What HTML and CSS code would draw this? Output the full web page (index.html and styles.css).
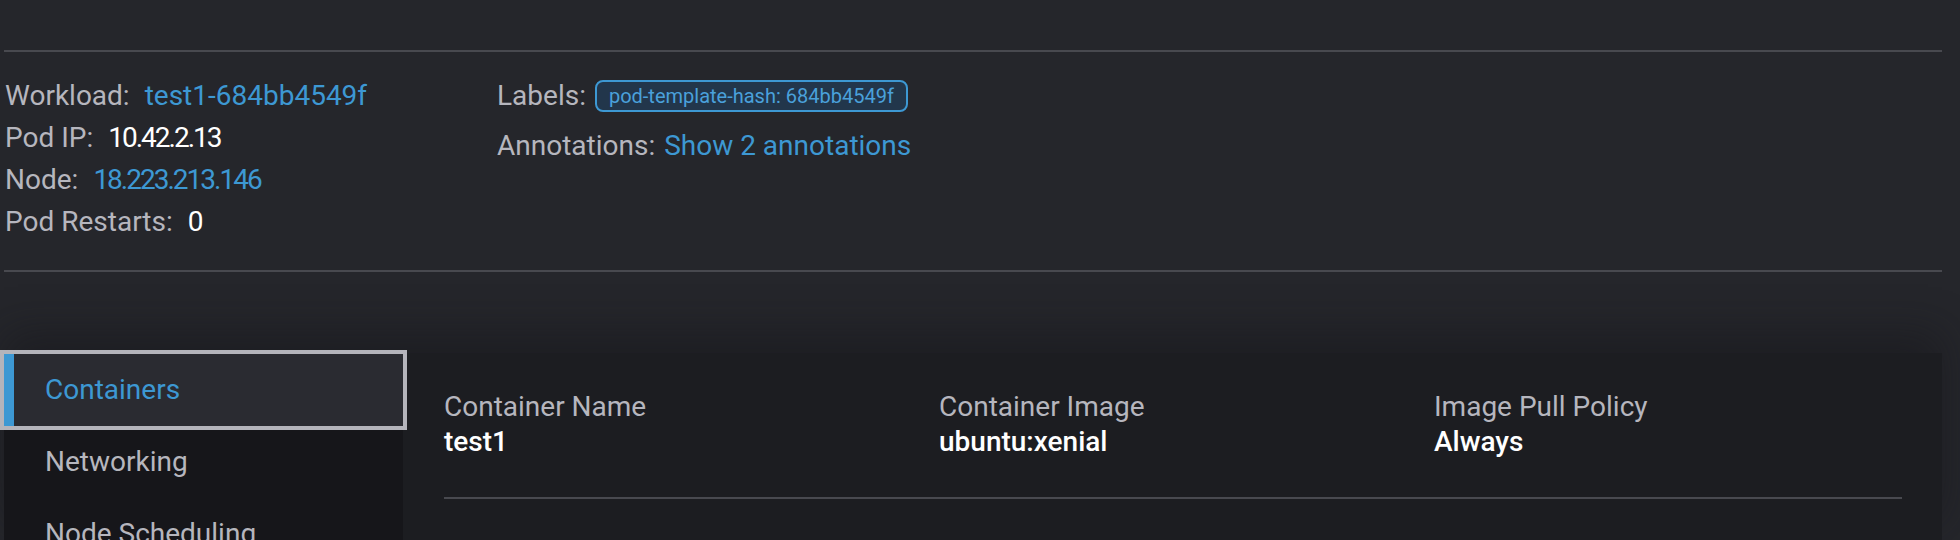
FILE: index.html
```html
<!DOCTYPE html>
<html lang="en">
<head>
<meta charset="utf-8">
<title>Pod detail</title>
<link rel="stylesheet" href="styles.css">
</head>
<body>
<div class="page">
  <div class="head-space"></div>
  <div class="rule"></div>
  <section class="info">
    <div class="info-col left">
      <div class="row"><span class="lbl">Workload:</span><a class="val link">test1-684bb4549f</a></div>
      <div class="row"><span class="lbl">Pod IP:</span><span class="val num">10.42.2.13</span></div>
      <div class="row"><span class="lbl">Node:</span><a class="val link num">18.223.213.146</a></div>
      <div class="row"><span class="lbl">Pod Restarts:</span><span class="val">0</span></div>
    </div>
    <div class="info-col right">
      <div class="row meta"><span class="lbl">Labels:</span><span class="badge">pod-template-hash: 684bb4549f</span></div>
      <div class="row meta"><span class="lbl">Annotations:</span> <a class="link">Show 2 annotations</a></div>
    </div>
  </section>
  <div class="rule"></div>
  <section class="panel">
    <nav class="tabs">
      <div class="tab active">Containers</div>
      <div class="tab">Networking</div>
      <div class="tab">Node Scheduling</div>
    </nav>
    <div class="content">
      <div class="fields">
        <div class="field"><div class="f-lbl">Container Name</div><div class="f-val">test1</div></div>
        <div class="field"><div class="f-lbl">Container Image</div><div class="f-val">ubuntu:xenial</div></div>
        <div class="field"><div class="f-lbl">Image Pull Policy</div><div class="f-val">Always</div></div>
      </div>
      <div class="divider"></div>
    </div>
  </section>
</div>
</body>
</html>
```
FILE: styles.css
```css
html, body {
  margin: 0;
  padding: 0;
  background: #25262b;
  height: 540px;
  overflow: hidden;
}
body {
  font-family: Roboto, "Open Sans", sans-serif;
  font-size: 28px;
  color: #b6b6be;
}
.page {
  margin-left: 4px;
  width: 1938px;
}
.head-space {
  height: 50px;
}
.rule {
  height: 2px;
  background: #48494f;
}
.info {
  display: flex;
  padding: 23px 0 27px 1px;
}
.info-col.left {
  width: 492px;
}
.row {
  height: 42px;
  line-height: 42px;
  display: flex;
  align-items: center;
  white-space: nowrap;
}
.row .lbl {
  margin-right: 15px;
}
.val {
  color: #ffffff;
}
.val.num {
  letter-spacing: -2px;
}
.link {
  color: #3d98d3;
  text-decoration: none;
}
.row.meta {
  margin-bottom: 8px;
}
.row.meta .lbl {
  margin-right: 9px;
}
.badge {
  display: inline-flex;
  align-items: center;
  height: 28px;
  padding: 0 12px;
  border: 2px solid #3d98d3;
  border-radius: 8px;
  background: #22364b;
  color: #4aa1db;
  font-size: 20px;
  line-height: 28px;
}
.panel {
  margin-top: 81px;
  height: 187px;
  display: flex;
  background: #1c1d21;
  box-shadow: 0 -20px 40px rgba(20, 20, 24, 0.45);
}
.tabs {
  width: 399px;
  background: #16161a;
  padding-top: 1px;
  flex-shrink: 0;
}
.tab {
  height: 72px;
  line-height: 72px;
  padding-left: 41px;
  color: #b6b6be;
  white-space: nowrap;
}
.tab.active {
  background: #2a2b31;
  color: #3d98d3;
  box-shadow: inset 10px 0 0 #3d98d3;
  outline: 4px solid #b4b4bb;
  position: relative;
}
.content {
  flex: 1;
  min-width: 0;
  padding: 36px 40px 0 41px;
}
.fields {
  display: grid;
  grid-template-columns: 495px 495px 1fr;
}
.f-lbl {
  line-height: 35px;
  color: #b6b6be;
}
.f-val {
  line-height: 35px;
  color: #ffffff;
  font-weight: 500;
}
.divider {
  margin-top: 38px;
  height: 2px;
  background: #48494f;
}
```
